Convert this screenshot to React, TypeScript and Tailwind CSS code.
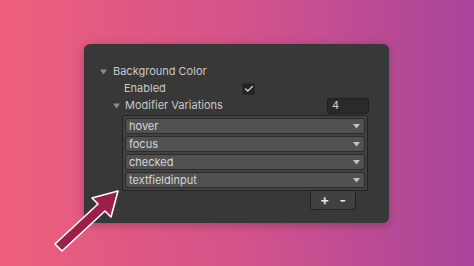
import { Check } from 'lucide-react';

function Caret({ className = '' }: { className?: string }) {
  return (
    <svg width="7" height="6" viewBox="0 0 7 6" className={className}>
      <path d="M0 0.5 L7 0.5 L3.5 5.5 Z" fill="#8a8a8a" />
    </svg>
  );
}

function Dropdown({ label }: { label: string }) {
  return (
    <div className="flex h-[16px] items-center justify-between rounded-[3px] border border-[#2b2b2b] bg-[#515151] pl-[3px] pr-[4px]">
      <span className="text-[11px] leading-none text-[#d6d6d6]">{label}</span>
      <svg width="7" height="5" viewBox="0 0 7 5">
        <path d="M0 0 L7 0 L3.5 4.5 Z" fill="#c4c4c4" />
      </svg>
    </div>
  );
}

export default function App() {
  const variations = ['hover', 'focus', 'checked', 'textfieldinput'];

  return (
    <div
      className="relative h-[266px] w-[474px] overflow-hidden bg-gradient-to-r from-[#ee5f7b] via-[#d4538a] to-[#a9449b] pl-[84px] pt-[44px]"
      style={{ fontFamily: 'Inter, "Noto Sans", sans-serif' }}
    >
      <div className="h-[179px] w-[305px] rounded-[6px] bg-[#383838] pl-[15px] pr-[20px] pt-[19px] shadow-[0_2px_10px_rgba(0,0,0,0.25)]">
        {/* Background Color */}
        <div className="flex h-[17px] items-center">
          <Caret className="ml-[1px] mr-[6px]" />
          <span className="text-[11px] text-[#c8c8c8]">Background Color</span>
        </div>

        {/* Enabled */}
        <div className="flex h-[17px] items-center pl-[25px]">
          <span className="w-[118px] text-[11px] text-[#c8c8c8]">Enabled</span>
          <div className="flex h-[12px] w-[13px] items-center justify-center rounded-[2px] border border-[#2a2a2a] bg-[#242424]">
            <Check size={10} strokeWidth={3} color="#e6e6e6" />
          </div>
        </div>

        {/* Modifier Variations */}
        <div className="flex h-[17px] items-center justify-between pl-[14px]">
          <div className="flex items-center">
            <Caret className="mr-[5px]" />
            <span className="text-[11px] text-[#c8c8c8]">Modifier Variations</span>
          </div>
          <div className="flex h-[16px] w-[42px] items-center rounded-[2px] border border-[#202020] bg-[#2a2a2a] pl-[4px] text-[11px] text-[#d0d0d0]">
            4
          </div>
        </div>

        {/* list */}
        <div className="ml-[23px] mr-[1px] mt-[1px] flex flex-col gap-[2px] rounded-t-[3px] border border-[#232323] bg-[#414141] p-[2px]">
          {variations.map(v => (
            <Dropdown key={v} label={v} />
          ))}
        </div>
        <div className="flex justify-end pr-[13px]">
          <div className="flex h-[19px] w-[46px] items-center justify-center gap-[10px] rounded-b-[3px] border border-t-0 border-[#232323] bg-[#414141] text-[14px] font-semibold leading-none text-[#e8e8e8]">
            <span>+</span>
            <span>-</span>
          </div>
        </div>
      </div>

      {/* pointer arrow */}
      <svg className="absolute left-0 top-0" width="474" height="266" viewBox="0 0 474 266">
        <path
          d="M55 244 L98 204 L92 198 L118 191 L111 217 L105 211 L62 251 Z"
          fill="#9b1f4a"
          stroke="#ffffff"
          strokeWidth="1.6"
          strokeLinejoin="round"
        />
      </svg>
    </div>
  );
}
